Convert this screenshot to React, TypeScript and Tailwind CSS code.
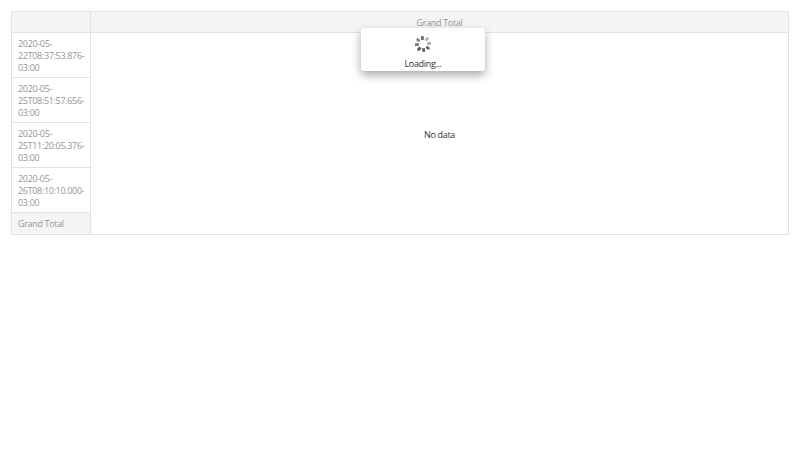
const rows = [
  "2020-05-\n22T08:37:53.876-\n03:00",
  "2020-05-\n25T08:51:57.656-\n03:00",
  "2020-05-\n25T11:20:05.376-\n03:00",
  "2020-05-\n26T08:10:10.000-\n03:00",
];

export default function App() {
  return (
    <div className="h-[450px] w-[800px] bg-white p-[11px] font-['Open_Sans',sans-serif] text-[9px] leading-[12px] tracking-[-0.33px]">
      <div className="relative flex h-[224px] w-[778px] border border-[#e2e2e2]">
        {/* row headers */}
        <div className="flex w-[79px] shrink-0 flex-col border-r border-[#e2e2e2] text-[#959595]">
          <div className="h-[21px] border-b border-[#e2e2e2] bg-[#f5f5f5]" />
          {rows.map((r) => (
            <div
              key={r}
              className="h-[45px] whitespace-pre border-b border-[#e2e2e2] pl-[6px] pt-[5px] leading-[12px]"
            >
              {r}
            </div>
          ))}
          <div className="flex flex-1 items-center bg-[#f5f5f5] pl-[6px]">Grand Total</div>
        </div>

        {/* data area */}
        <div className="flex flex-1 flex-col">
          <div className="flex h-[21px] items-center justify-center border-b border-[#e2e2e2] bg-[#f5f5f5] pt-[2px] text-[#959595]">
            Grand Total
          </div>
          <div className="flex flex-1 items-center justify-center pt-[2px] text-[#333333]">No data</div>
        </div>

        {/* loading panel */}
        <div className="absolute left-[349px] top-[16px] flex h-[43px] w-[124px] flex-col items-center rounded-[3px] bg-white pt-[7px] shadow-[0_4px_10px_rgba(0,0,0,0.35)]">
          <svg width="18" height="18" viewBox="0 0 18 18" fill="none" strokeWidth="2.8" strokeLinecap="butt" className="-rotate-6">
            <path d="M9 1v3.8" stroke="#666666" />
            <path d="M14.7 3.3l-2.7 2.7" stroke="#b5b5b5" />
            <path d="M17 9h-3.8" stroke="#a8a8a8" />
            <path d="M14.7 14.7l-2.7-2.7" stroke="#6e6e6e" />
            <path d="M9 17v-3.8" stroke="#666666" />
            <path d="M3.3 14.7l2.7-2.7" stroke="#555555" />
            <path d="M1 9h3.8" stroke="#777777" />
            <path d="M3.3 3.3l2.7 2.7" stroke="#8a8a8a" />
          </svg>
          <div className="mt-[5px] text-[#333333]">Loading...</div>
        </div>
      </div>
    </div>
  );
}
